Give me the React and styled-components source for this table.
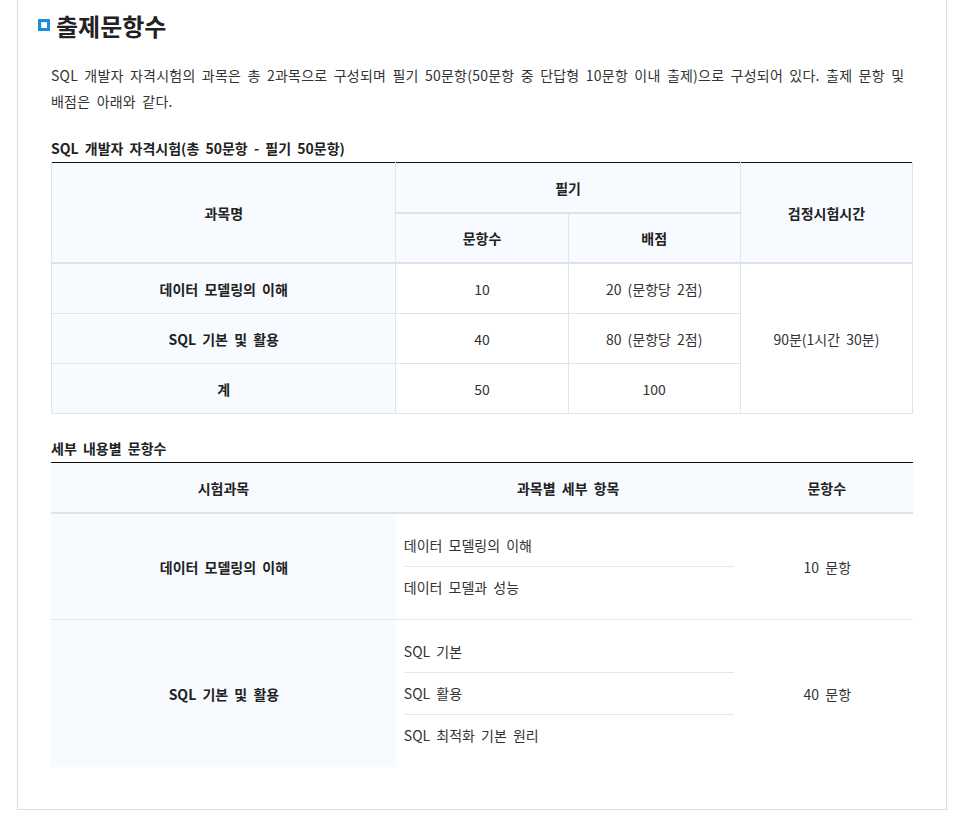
import styled, { createGlobalStyle } from 'styled-components'

const GlobalStyle = createGlobalStyle`
	body {
		margin: 0;
		background: #fff;
		font-family: "Noto Sans CJK KR", "Noto Sans", sans-serif;
		color: #333;
		word-spacing: 3px;
	}
`

const Box = styled.div`
	width: 930px;
	margin-left: 17px;
	border: 1px solid #dddddd;
	border-top: none;
	padding: 0 20px 42px;
	box-sizing: border-box;
`

const Heading = styled.h2`
	display: flex;
	align-items: center;
	gap: 6px;
	margin: 0;
	height: 50px;
	font-size: 24px;
	font-weight: bold;
	color: #222;
	word-spacing: 0;
`

const Bullet = styled.span`
	width: 12px;
	height: 12px;
	box-sizing: border-box;
	border: 3px solid #1a8fdc;
	background: #fff;
	box-shadow: inset 1px 1px 0 #cfe6f7;
	flex-shrink: 0;
`

const Content = styled.div`
	padding: 0 13px;
`

const Intro = styled.p`
	margin: 12px 0 0;
	font-size: 14px;
	line-height: 26px;
	color: #333;
	letter-spacing: 0.22px;
`

const Caption = styled.h3`
	margin: 24px 0 4px;
	font-size: 14px;
	line-height: 20px;
	font-weight: bold;
	color: #222;
`

const Table = styled.table`
	width: 100%;
	border-collapse: collapse;
	table-layout: fixed;
	border-top: 1px solid #111;
	font-size: 14px;
	color: #333;
	text-align: center;
`

const Th = styled.th`
	height: ${({ $sub }) => ($sub ? '48px' : '49px')};
	padding: 0;
	background: #f7faff;
	font-weight: bold;
	color: #222;
	border: 1px solid #e1e4e9;
	border-top: none;
	border-bottom: 2px solid #dfe2e7;
`

const Td = styled.td`
	height: 49px;
	padding: 0;
	border: 1px solid #e1e4e9;
	background: ${({ $head }) => ($head ? '#f7faff' : '#fff')};
	font-weight: ${({ $head }) => ($head ? 'bold' : 'normal')};
	color: ${({ $head }) => ($head ? '#222' : '#333')};
`

const PlainTh = styled.th`
	height: 49px;
	padding: 0;
	background: #f7faff;
	font-weight: bold;
	color: #222;
	border-bottom: 2px solid #dfe2e7;
`

const Row = styled.tr`
	border-bottom: 1px solid #e3e6ea;
	&:last-child {
		border-bottom: none;
	}
`

const PlainTd = styled.td`
	padding: 11px 7px 11px 8px;
	background: ${({ $head }) => ($head ? '#f7faff' : '#fff')};
	font-weight: ${({ $head }) => ($head ? 'bold' : 'normal')};
	color: ${({ $head }) => ($head ? '#222' : '#333')};
	text-align: ${({ $left }) => ($left ? 'left' : 'center')};
`

const ItemList = styled.ul`
	list-style: none;
	margin: 0;
	padding: 0;
`

const Item = styled.li`
	height: 41px;
	line-height: 41px;
	& + & {
		border-top: 1px solid #e3e6ea;
	}
`

const topics = [
	{ name: '데이터 모델링의 이해', items: ['데이터 모델링의 이해', '데이터 모델과 성능'], count: '10 문항' },
	{ name: 'SQL 기본 및 활용', items: ['SQL 기본', 'SQL 활용', 'SQL 최적화 기본 원리'], count: '40 문항' },
]

function App () {
	return (
		<>
			<GlobalStyle />
			<Box>
				<Heading>
					<Bullet />
					<span>출제문항수</span>
				</Heading>
				<Content>
					<Intro>
						SQL 개발자 자격시험의 과목은 총 2과목으로 구성되며 필기 50문항(50문항 중 단답형 10문항 이내 출제)으로 구성되어 있다. 출제 문항 및 배점은 아래와 같다.
					</Intro>

					<Caption>SQL 개발자 자격시험(총 50문항 - 필기 50문항)</Caption>
					<Table>
						<colgroup>
							<col style={{ width: '40%' }} />
							<col style={{ width: '20%' }} />
							<col style={{ width: '20%' }} />
							<col style={{ width: '20%' }} />
						</colgroup>
						<thead>
							<tr>
								<Th rowSpan={2}>과목명</Th>
								<Th colSpan={2}>필기</Th>
								<Th rowSpan={2}>검정시험시간</Th>
							</tr>
							<tr>
								<Th $sub>문항수</Th>
								<Th $sub>배점</Th>
							</tr>
						</thead>
						<tbody>
							<tr>
								<Td $head>데이터 모델링의 이해</Td>
								<Td>10</Td>
								<Td>20 (문항당 2점)</Td>
								<Td rowSpan={3}>90분(1시간 30분)</Td>
							</tr>
							<tr>
								<Td $head>SQL 기본 및 활용</Td>
								<Td>40</Td>
								<Td>80 (문항당 2점)</Td>
							</tr>
							<tr>
								<Td $head>계</Td>
								<Td>50</Td>
								<Td>100</Td>
							</tr>
						</tbody>
					</Table>

					<Caption>세부 내용별 문항수</Caption>
					<Table>
						<colgroup>
							<col style={{ width: '40%' }} />
							<col style={{ width: '40%' }} />
							<col style={{ width: '20%' }} />
						</colgroup>
						<thead>
							<tr>
								<PlainTh>시험과목</PlainTh>
								<PlainTh>과목별 세부 항목</PlainTh>
								<PlainTh>문항수</PlainTh>
							</tr>
						</thead>
						<tbody>
							{ topics.map(topic => (
								<Row key={ topic.name }>
									<PlainTd $head>{ topic.name }</PlainTd>
									<PlainTd $left>
										<ItemList>
											{ topic.items.map(item => <Item key={ item }>{ item }</Item>) }
										</ItemList>
									</PlainTd>
									<PlainTd>{ topic.count }</PlainTd>
								</Row>
							)) }
						</tbody>
					</Table>
				</Content>
			</Box>
		</>
	)
}

export default App
